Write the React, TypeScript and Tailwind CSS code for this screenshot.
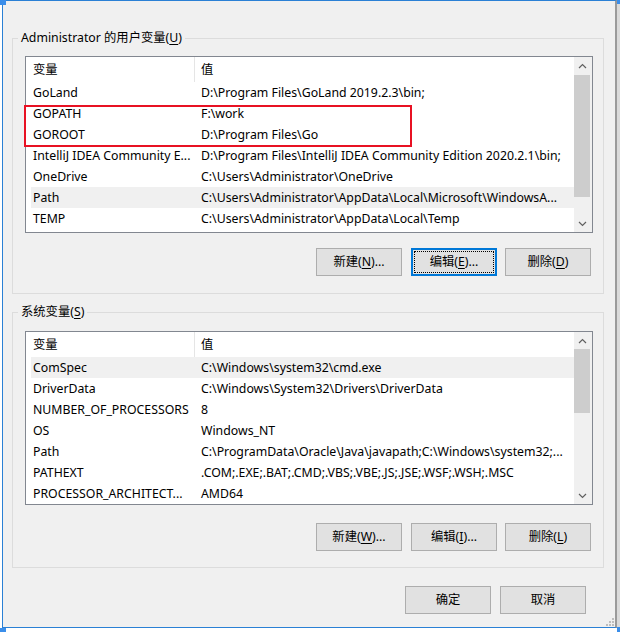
import React from "react";

type Row = [string, string];

const userVars: Row[] = [
  ["GoLand", "D:\\Program Files\\GoLand 2019.2.3\\bin;"],
  ["GOPATH", "F:\\work"],
  ["GOROOT", "D:\\Program Files\\Go"],
  ["IntelliJ IDEA Community E...", "D:\\Program Files\\IntelliJ IDEA Community Edition 2020.2.1\\bin;"],
  ["OneDrive", "C:\\Users\\Administrator\\OneDrive"],
  ["Path", "C:\\Users\\Administrator\\AppData\\Local\\Microsoft\\WindowsA..."],
  ["TEMP", "C:\\Users\\Administrator\\AppData\\Local\\Temp"],
];

const sysVars: Row[] = [
  ["ComSpec", "C:\\Windows\\system32\\cmd.exe"],
  ["DriverData", "C:\\Windows\\System32\\Drivers\\DriverData"],
  ["NUMBER_OF_PROCESSORS", "8"],
  ["OS", "Windows_NT"],
  ["Path", "C:\\ProgramData\\Oracle\\Java\\javapath;C:\\Windows\\system32;..."],
  ["PATHEXT", ".COM;.EXE;.BAT;.CMD;.VBS;.VBE;.JS;.JSE;.WSF;.WSH;.MSC"],
  ["PROCESSOR_ARCHITECT...", "AMD64"],
];

function Chevron({ up }: { up?: boolean }) {
  return (
    <svg width="9" height="6" viewBox="0 0 9 6">
      <polyline
        points={up ? "1,5 4.5,1.5 8,5" : "1,1 4.5,4.5 8,1"}
        fill="none"
        stroke="#606060"
        strokeWidth="1.2"
      />
    </svg>
  );
}

function ListView({
  rows,
  highlight,
  heightClass,
  thumb,
  red,
}: {
  rows: Row[];
  highlight: number;
  heightClass: string;
  thumb: "user" | "sys";
  red?: boolean;
}) {
  return (
    <div className={`relative ml-[12px] w-[568px] ${heightClass} border border-[#828790] bg-white flex`}>
      <div className="flex-1 min-w-0 flex flex-col overflow-hidden">
        <div className="h-[25px] flex shrink-0">
          <div className="w-[169px] pl-[7px] border-r border-[#e5e5e5] flex items-center">变量</div>
          <div className="pl-[6px] flex items-center">值</div>
        </div>
        {rows.map((r, i) => (
          <div
            key={i}
            className={`h-[21px] shrink-0 ml-[5px] flex items-center ${i === highlight ? "bg-[#f0f0f0]" : ""}`}
          >
            <div className="w-[163px] shrink-0 pl-[2px] whitespace-nowrap">{r[0]}</div>
            <div className="flex-1 min-w-0 pl-[7px] whitespace-nowrap overflow-hidden">{r[1]}</div>
          </div>
        ))}
      </div>
      <div className="w-[18px] shrink-0 bg-[#f0f0f0] flex flex-col">
        <div className="h-[17px] w-[17px] flex items-center justify-center shrink-0">
          <Chevron up />
        </div>
        {thumb === "user" ? (
          <div className="mt-[1px] h-[122px] w-[16px] bg-[#cdcdcd] shrink-0" />
        ) : (
          <div className="h-[64px] w-[16px] bg-[#cdcdcd] shrink-0" />
        )}
        <div className="flex-1" />
        <div className="h-[17px] w-[17px] flex items-center justify-center shrink-0">
          <Chevron />
        </div>
      </div>
      {red && (
        <div className="absolute left-[-2px] top-[48px] w-[388px] h-[42px] border-2 border-[#e81123]" />
      )}
    </div>
  );
}

function Btn({
  children,
  focused,
  className = "",
}: {
  children: React.ReactNode;
  focused?: boolean;
  className?: string;
}) {
  if (focused) {
    return (
      <div className={`w-[86px] h-[28px] shrink-0 bg-[#e1e1e1] border-2 border-[#0078d7] p-[1px] ${className}`}>
        <div className="w-full h-full border border-dotted border-black flex items-center justify-center">
          {children}
        </div>
      </div>
    );
  }
  return (
    <div
      className={`w-[86px] h-[28px] shrink-0 bg-[#e1e1e1] border border-[#adadad] flex items-center justify-center ${className}`}
    >
      {children}
    </div>
  );
}

const U = ({ children }: { children: React.ReactNode }) => <span className="underline underline-offset-2">{children}</span>;

export default function App() {
  return (
    <div className="relative w-[620px] h-[632px] bg-white overflow-hidden text-[12.3px] leading-[16px] text-black font-['Noto_Sans','Noto_Sans_CJK_SC',sans-serif]">
      <div className="flex">
        <div className="ml-[2px] w-[615px] h-[628px] border border-[#2a80d5] border-r-2 border-r-[#9a9a9a] bg-[#f0f0f0] pl-[9px] pt-[37px] flex flex-col">
          {/* user variables */}
          <div className="w-[592px] h-[256px] border border-[#dcdcdc] flex flex-col shrink-0">
            <div className="-mt-[9px] ml-[5px] px-[3px] w-fit bg-[#f0f0f0] leading-[16px]">
              Administrator 的用户变量(<U>U</U>)
            </div>
            <div className="mt-[10px]">
              <ListView rows={userVars} highlight={5} heightClass="h-[177px]" thumb="user" red />
            </div>
            <div className="mt-[15px] flex">
              <Btn className="ml-[303px]">
                新建(<U>N</U>)...
              </Btn>
              <Btn className="ml-[9px]" focused>
                编辑(<U>E</U>)...
              </Btn>
              <Btn className="ml-[8px]">
                删除(<U>D</U>)
              </Btn>
            </div>
          </div>

          {/* system variables */}
          <div className="mt-[18px] w-[592px] h-[256px] border border-[#dcdcdc] flex flex-col shrink-0">
            <div className="-mt-[9px] ml-[5px] px-[3px] w-fit bg-[#f0f0f0] leading-[16px]">
              系统变量(<U>S</U>)
            </div>
            <div className="mt-[11px]">
              <ListView rows={sysVars} highlight={0} heightClass="h-[174px]" thumb="sys" />
            </div>
            <div className="mt-[18px] flex">
              <Btn className="ml-[303px]">
                新建(<U>W</U>)...
              </Btn>
              <Btn className="ml-[9px]">
                编辑(<U>I</U>)...
              </Btn>
              <Btn className="ml-[8px]">
                删除(<U>L</U>)
              </Btn>
            </div>
          </div>

          {/* OK / Cancel */}
          <div className="mt-[18px] flex">
            <Btn className="ml-[393px]">确定</Btn>
            <Btn className="ml-[9px]">取消</Btn>
          </div>
        </div>
        <div className="w-[3px] h-[627px] bg-[#dadada]" />
      </div>

      {/* size grip */}
      <svg className="absolute left-[604px] top-[618px]" width="11" height="9" viewBox="0 0 11 9">
        <rect x="8" y="0" width="2" height="2" fill="#bdbdbd" />
        <rect x="5" y="3" width="2" height="2" fill="#bdbdbd" />
        <rect x="8" y="3" width="2" height="2" fill="#bdbdbd" />
        <rect x="2" y="6" width="2" height="2" fill="#bdbdbd" />
        <rect x="5" y="6" width="2" height="2" fill="#bdbdbd" />
        <rect x="8" y="6" width="2" height="2" fill="#bdbdbd" />
      </svg>

      {/* selection handles */}
      <div className="absolute left-0 top-0 w-[6px] h-[5px] bg-[#3b8eea]" />
      <div className="absolute left-[617px] top-0 w-[3px] h-[4px] bg-[#3b8eea]" />
      <div className="absolute left-0 top-[628px] w-[6px] h-[4px] bg-[#3b8eea]" />
      <div className="absolute left-[617px] top-[627px] w-[3px] h-[5px] bg-[#3b8eea]" />
    </div>
  );
}
